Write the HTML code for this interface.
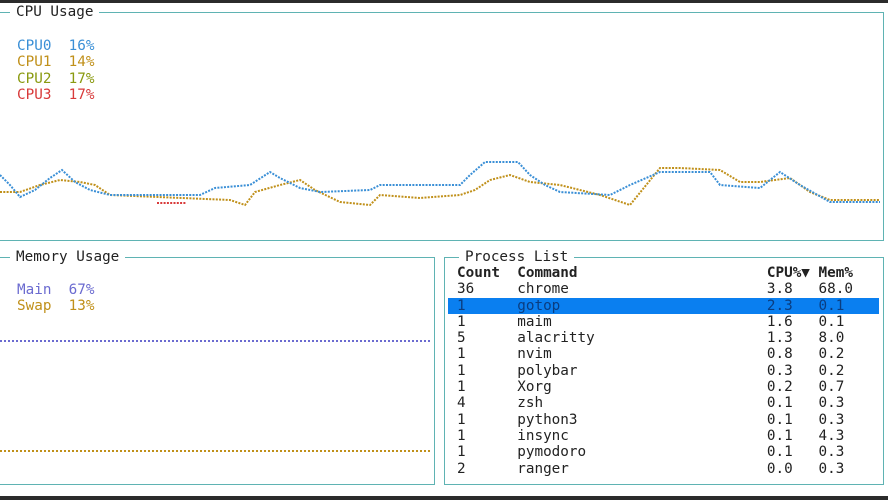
<!DOCTYPE html>
<html><head><meta charset="utf-8"><style>
*{margin:0;padding:0;box-sizing:border-box}
body{width:888px;height:500px;overflow:hidden;background:#fff;position:relative;font-family:"DejaVu Sans Mono","Liberation Mono",monospace;font-size:14.3px;line-height:16.3px;color:#222}
.bar{position:absolute;left:0;width:888px;background:#2b2b2b}
.box{position:absolute;border:1.5px solid #5fb3b3}
.t{position:absolute;background:#fff;padding:0 6px;color:#222;top:-9px;white-space:pre}
.a{position:absolute;white-space:pre}
</style></head><body>
<div class="bar" style="top:0;height:3px"></div>
<div class="bar" style="top:496px;height:4px"></div>

<div class="box" style="left:-2px;top:12px;width:886px;height:229px">
<div class="t" style="left:11px">CPU Usage</div>
</div>
<div class="a" style="left:17px;top:38px"><span style="color:#3a8fd6">CPU0  16%</span>
<span style="color:#c0901a">CPU1  14%</span>
<span style="color:#8a9a10">CPU2  17%</span>
<span style="color:#d83a3a">CPU3  17%</span></div>
<svg style="position:absolute;left:0;top:150px" width="888" height="70" viewBox="0 150 888 70">
<g fill="none" stroke-width="2" stroke-dasharray="2 1.3">
<polyline stroke="#c0901a" points="0,192 20,192 40,185 60,180 80,182 95,185 110,195 230,200 245,205 255,192 280,185 300,180 315,190 340,202 370,205 380,195 420,198 460,195 475,190 490,180 510,175 530,182 560,185 600,195 630,205 660,168 680,168 720,170 740,182 760,182 790,178 810,192 830,200 880,200"/>
<polyline stroke="#3a8fd6" points="0,175 10,185 20,197 35,190 50,178 62,170 75,182 90,190 110,195 200,195 215,188 250,185 270,172 280,178 300,188 320,192 370,190 380,185 460,185 470,175 485,162 518,162 530,175 545,185 560,192 610,195 630,185 660,172 710,172 720,185 760,188 780,172 800,185 830,202 880,202"/>
<polyline stroke="#d83a3a" points="157,203 186,203"/>
</g></svg>

<div class="box" style="left:-2px;top:257px;width:437px;height:228px">
<div class="t" style="left:11px">Memory Usage</div>
</div>
<div class="a" style="left:17px;top:282px"><span style="color:#6b6bd0">Main  67%</span>
<span style="color:#c0901a">Swap  13%</span></div>
<div style="position:absolute;left:0;top:340px;width:430px;border-top:2px dotted #6b6bd0"></div>
<div style="position:absolute;left:0;top:450px;width:430px;border-top:2px dotted #c0901a"></div>

<div class="box" style="left:444px;top:257px;width:440px;height:228px">
<div class="t" style="left:14px">Process List</div>
</div>
<div style="position:absolute;left:448px;top:298px;width:431px;height:16px;background:#0a7ff0"></div>
<div class="a" style="left:457px;top:265px"><b>Count  Command                      CPU%▼ Mem%</b>
36     chrome                       3.8   68.0
<span style="color:#0a3d80">1      gotop                        2.3   0.1</span>
1      maim                         1.6   0.1
5      alacritty                    1.3   8.0
1      nvim                         0.8   0.2
1      polybar                      0.3   0.2
1      Xorg                         0.2   0.7
4      zsh                          0.1   0.3
1      python3                      0.1   0.3
1      insync                       0.1   4.3
1      pymodoro                     0.1   0.3
2      ranger                       0.0   0.3</div>
</body></html>
